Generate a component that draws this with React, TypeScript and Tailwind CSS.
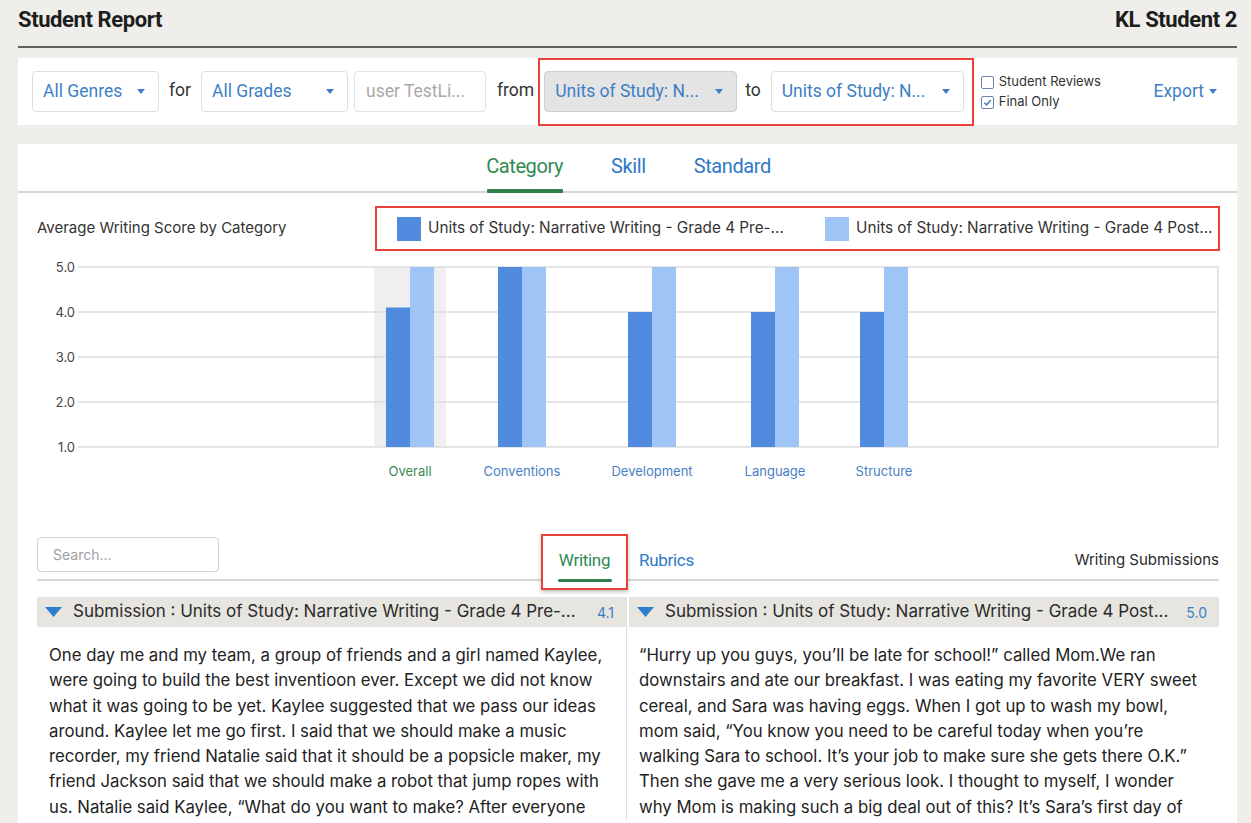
import React from 'react';

const sans = { fontFamily: 'Roboto, "Liberation Sans", Arial, sans-serif' };
const body = { fontFamily: 'Inter, "Noto Sans", Arial, sans-serif' };

const leftLines = [
  'One day me and my team, a group of friends and a girl named Kaylee,',
  'were going to build the best inventioon ever. Except we did not know',
  'what it was going to be yet. Kaylee suggested that we pass our ideas',
  'around. Kaylee let me go first. I said that we should make a music',
  'recorder, my friend Natalie said that it should be a popsicle maker, my',
  'friend Jackson said that we should make a robot that jump ropes with',
  'us. Natalie said Kaylee, \u201CWhat do you want to make? After everyone',
];

const rightLines = [
  '\u201CHurry up you guys, you\u2019ll be late for school!\u201D called Mom.We ran',
  'downstairs and ate our breakfast. I was eating my favorite VERY sweet',
  'cereal, and Sara was having eggs. When I got up to wash my bowl,',
  'mom said, \u201CYou know you need to be careful today when you\u2019re',
  'walking Sara to school. It\u2019s your job to make sure she gets there O.K.\u201D',
  'Then she gave me a very serious look. I thought to myself, I wonder',
  'why Mom is making such a big deal out of this? It\u2019s Sara\u2019s first day of',
];

// chart coords are page x minus 18, page y minus 255
const bars = [
  { label: 'Overall', cx: 392, pre: 4.1, post: 5, active: true },
  { label: 'Conventions', cx: 504, pre: 5, post: 5 },
  { label: 'Development', cx: 634, pre: 4, post: 5 },
  { label: 'Language', cx: 757, pre: 4, post: 5 },
  { label: 'Structure', cx: 866, pre: 4, post: 5 },
];

const yOf = (v: number) => 192 - (v - 1) * 45;

const Caret = ({ className = '' }: { className?: string }) => (
  <svg width="8" height="5" viewBox="0 0 8 5" className={className}>
    <path d="M0 0 L8 0 L4 5 Z" fill="currentColor" />
  </svg>
);

const Select = ({ label, w, active }: { label: string; w: string; active?: boolean }) => (
  <div
    className={`${w} h-[41px] flex items-center justify-between pl-[10px] pr-[13px] rounded-[4px] border ${
      active ? 'bg-[#e4e4e4] border-[#cfcfcf]' : 'bg-white border-[#dedede]'
    } text-[17.5px] text-[#3d7fc6]`}
  >
    <span className="truncate">{label}</span>
    <Caret className="text-[#3d7fc6] shrink-0" />
  </div>
);

const Checkbox = ({ checked, label }: { checked?: boolean; label: string }) => (
  <div className="flex items-center gap-[5px] h-[20px]">
    <span className="w-[13px] h-[13px] border border-[#6a86b0] rounded-[2px] bg-white flex items-center justify-center">
      {checked && (
        <svg width="9" height="9" viewBox="0 0 10 10">
          <path d="M1.5 5.2 L4 7.6 L8.6 2.2" stroke="#3d7fc6" strokeWidth="1.6" fill="none" />
        </svg>
      )}
    </span>
    <span className="text-[13px] text-[#333]" style={body}>{label}</span>
  </div>
);

function Chart() {
  return (
    <svg width="1219" height="230" className="block" style={body}>
      <rect x="356" y="12" width="72" height="180" fill="#efefef" />
      {[5, 4, 3, 2, 1].map((v) => (
        <g key={v}>
          <line x1="60" x2="1200" y1={yOf(v)} y2={yOf(v)} stroke="#dcdcdc" strokeWidth="1.5" />
          <text x="57" y={yOf(v) + 4.5} textAnchor="end" fontSize="13" fill="#444">
            {v.toFixed(1)}
          </text>
        </g>
      ))}
      <line x1="1200" x2="1200" y1="12" y2="192" stroke="#dcdcdc" strokeWidth="1.5" />
      {bars.map((b) => (
        <g key={b.label}>
          <rect x={b.cx - 24} y={yOf(b.pre)} width="24" height={192 - yOf(b.pre)} fill="#508be0" />
          <rect x={b.cx} y={yOf(b.post)} width="24" height={192 - yOf(b.post)} fill="#9fc4f6" />
          <text
            x={b.cx}
            y="221"
            textAnchor="middle"
            fontSize="13"
            fill={b.active ? '#3c8a57' : '#4a80c4'}
          >
            {b.label}
          </text>
        </g>
      ))}
    </svg>
  );
}

const SubmissionHeader = ({ title, score }: { title: string; score: string }) => (
  <div className="h-[30px] bg-[#e6e5df] flex items-center pl-[8px] pr-[12px]" style={body}>
    <svg width="17" height="10" viewBox="0 0 17 10" className="shrink-0">
      <path d="M0 0 L17 0 L8.5 10 Z" fill="#2f7fd0" />
    </svg>
    <span className="ml-[11px] text-[17px] text-[#2b2b2b] flex-1 truncate">{title}</span>
    <span className="text-[14px] text-[#3d7fc6]">{score}</span>
  </div>
);

export default function App() {
  return (
    <div className="min-h-screen bg-[#efeeea] pl-[18px] pr-[14px] overflow-hidden" style={sans}>
      {/* header */}
      <div className="h-[48px] flex items-center justify-between border-b-2 border-[#606060]">
        <h1 className="text-[22px] font-bold text-[#1d1d1d] tracking-[-0.4px] -mt-[7px]">Student Report</h1>
        <div className="text-[22px] font-bold text-[#1d1d1d] tracking-[-0.4px] -mt-[7px]">KL Student 2</div>
      </div>

      {/* filters */}
      <div className="mt-[10px] h-[67px] bg-white flex items-center pl-[14px]">
        <Select label="All Genres" w="w-[127px]" />
        <span className="ml-[10px] text-[17.5px] text-[#333] -mt-[2px]">for</span>
        <div className="ml-[10px]">
          <Select label="All Grades" w="w-[147px]" />
        </div>
        <div className="ml-[6px] w-[132px] h-[41px] rounded-[4px] border border-[#e2e2e2] flex items-center pl-[11px] text-[17.5px] text-[#a9a9a9]">
          user TestLi...
        </div>
        <span className="ml-[11px] text-[17.5px] text-[#333] -mt-[2px]">from</span>
        <div className="ml-[4px] h-[68px] border-2 border-[#e8413a] flex items-center pl-[4px] pr-[8px]">
          <Select label="Units of Study: N..." w="w-[193px]" active />
          <span className="ml-[8px] text-[17.5px] text-[#333] -mt-[2px]">to</span>
          <div className="ml-[10px]">
            <Select label="Units of Study: N..." w="w-[193px]" />
          </div>
        </div>
        <div className="ml-[7px] flex flex-col mt-[1px]">
          <Checkbox label="Student Reviews" />
          <Checkbox label="Final Only" checked />
        </div>
        <div className="ml-auto mr-[20px] flex items-center gap-[5px] text-[17.5px] text-[#3d7fc6]">
          Export
          <Caret />
        </div>
      </div>

      {/* main panel */}
      <div className="mt-[19px] bg-white pb-[20px]">
        <div className="h-[49px] border-b-2 border-[#d6d6d6] flex justify-center items-end gap-[48px] pl-[2px]">
          <div className="h-full flex flex-col items-center justify-end">
            <span className="text-[20px] text-[#2f8a52] tracking-[-0.4px] mb-[8px]">Category</span>
            <span className="w-[76px] h-[4px] bg-[#2f7f4f] -mb-[2px] rounded-[1px]" />
          </div>
          <span className="text-[20px] text-[#2f79c6] tracking-[-0.4px] mb-[10px]">Skill</span>
          <span className="text-[20px] text-[#2f79c6] tracking-[-0.4px] mb-[10px]">Standard</span>
        </div>

        <div className="mt-[13px] flex items-center pl-[19px] pr-[17px]" style={body}>
          <div className="text-[15px] text-[#333] w-[338px]">Average Writing Score by Category</div>
          <div className="flex-1 h-[45px] border-2 border-[#e8413a] flex items-center pl-[20px] text-[15.3px] text-[#333]">
            <span className="w-[24px] h-[24px] bg-[#508be0]" />
            <span className="ml-[7px] w-[397px]">Units of Study: Narrative Writing - Grade 4 Pre-...</span>
            <span className="w-[24px] h-[24px] bg-[#9fc4f6]" />
            <span className="ml-[7px]">Units of Study: Narrative Writing - Grade 4 Post...</span>
          </div>
        </div>

        <div className="mt-[4px]">
          <Chart />
        </div>

        {/* submissions */}
        <div className="ml-[19px] mr-[18px] mt-[55px]">
          <div className="flex items-end border-b-2 border-[#d8d8d8] h-[44px] -mt-[3px]">
            <div
              className="w-[182px] h-[35px] mb-[7px] rounded-[4px] border border-[#d4d4d4] flex items-center pl-[15px] text-[14px] text-[#a0a0a0]"
              style={body}
            >
              Search...
            </div>
            <div className="ml-[322px] w-[87px] h-[56px] -mb-[11px] border-2 border-[#e8413a] shadow-[0_2px_4px_rgba(0,0,0,0.25)] flex flex-col items-center justify-start pt-[12px] bg-white">
              <span className="text-[17px] text-[#2f8a52] tracking-[-0.3px]">Writing</span>
              <span className="mt-[5px] w-[54px] h-[3px] bg-[#2f7f4f] rounded-full" />
            </div>
            <span className="ml-[11px] mb-[6px] text-[17px] text-[#2f79c6] tracking-[-0.3px]">Rubrics</span>
            <span className="ml-auto mb-[8px] text-[15px] text-[#2b2b2b]" style={body}>Writing Submissions</span>
          </div>

          <div className="mt-[16px] grid grid-cols-[590px_1fr]">
            <div className="border-r border-[#e0e0e0]">
              <SubmissionHeader title="Submission : Units of Study: Narrative Writing - Grade 4 Pre-..." score="4.1" />
              <div className="pl-[12px] pt-[16px] text-[16.75px] leading-[25.3px] text-[#222]" style={body}>
                {leftLines.map((l) => (
                  <div key={l} className="whitespace-nowrap">{l}</div>
                ))}
              </div>
            </div>
            <div className="pl-[2px]">
              <SubmissionHeader title="Submission : Units of Study: Narrative Writing - Grade 4 Post..." score="5.0" />
              <div className="pl-[10px] pt-[16px] text-[16.75px] leading-[25.3px] text-[#222]" style={body}>
                {rightLines.map((l) => (
                  <div key={l} className="whitespace-nowrap">{l}</div>
                ))}
              </div>
            </div>
          </div>
        </div>
      </div>
    </div>
  );
}
